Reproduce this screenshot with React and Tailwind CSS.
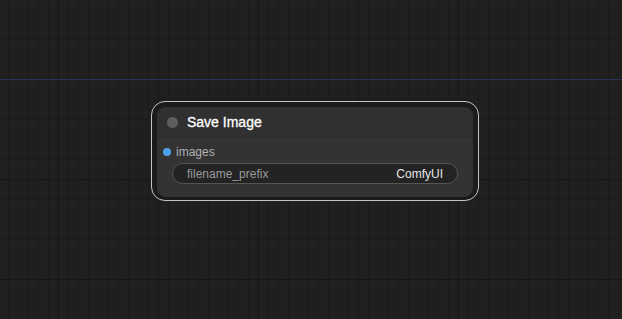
export default function App() {
  return (
    <div
      className="relative h-[319px] w-[622px] overflow-hidden bg-[#202020] font-['Liberation_Sans',Arial,sans-serif] [background-image:linear-gradient(to_right,#171717_1px,transparent_1px),linear-gradient(to_bottom,#171717_1px,transparent_1px),linear-gradient(to_right,#1b1b1b_1px,transparent_1px),linear-gradient(to_bottom,#1b1b1b_1px,transparent_1px)] [background-size:100px_100px,100px_100px,10px_10px,10px_10px] [background-position:58px_79px,58px_79px,8px_9px,8px_9px]"
    >
      {/* origin line */}
      <div className="absolute left-0 top-[79px] h-px w-full bg-[#29335a]" />

      {/* selected node */}
      <div className="absolute left-[151px] top-[101px] h-[100px] w-[328px] rounded-[14px] border border-[#c4c4c4] bg-[#1c1c1c] p-[5px] pb-[3px]">
        <div className="flex h-full flex-col overflow-hidden rounded-[9px] bg-[#333333] shadow-[0_2px_0_#1a1a1a]">
          <div className="flex h-[31px] items-center border-b border-[#2a2a2a] bg-[#303030] pl-[10px]">
            <span className="h-[11px] w-[11px] rounded-full bg-[#5e5e5e]" />
            <span className="ml-[9px] text-[14px] font-medium text-white [-webkit-text-stroke:0.3px_white]">Save Image</span>
          </div>
          <div className="flex flex-col px-[15px] pt-[5px]">
            <div className="flex items-center">
              <span className="-ml-[9px] h-[8px] w-[8px] rounded-full bg-[#4fa3ec]" />
              <span className="ml-[5px] text-[12px] text-[#b0b0b0]">images</span>
            </div>
            <div className="mt-[2px] flex h-[21px] items-center justify-between rounded-full border border-[#555555] bg-[#232323] px-[14px] text-[12px]">
              <span className="text-[#9a9a9a]">filename_prefix</span>
              <span className="text-[#e6e6e6]">ComfyUI</span>
            </div>
          </div>
        </div>
      </div>
    </div>
  );
}
